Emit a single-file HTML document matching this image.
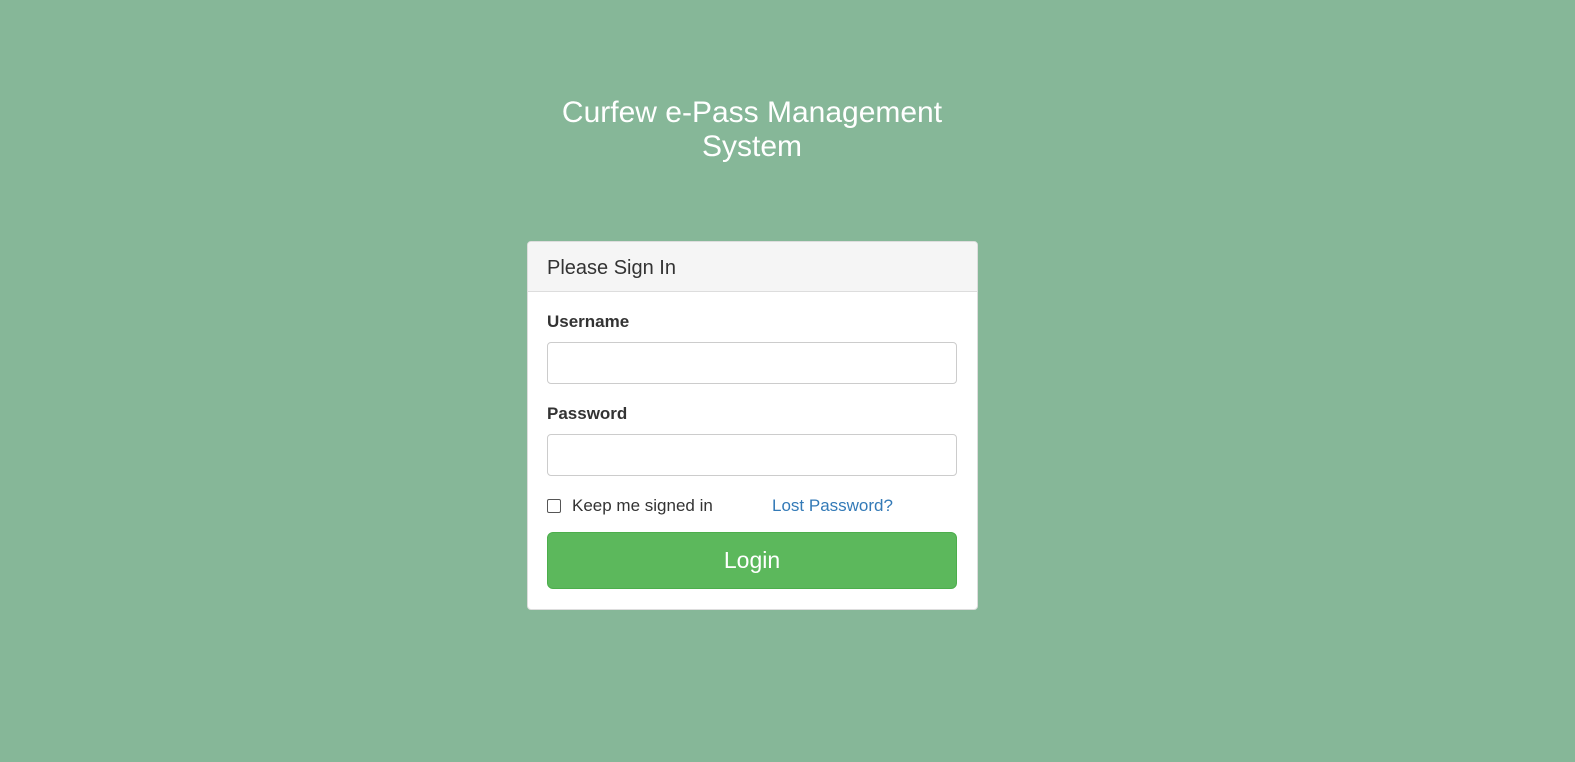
<!DOCTYPE html>
<html><head><style>
body{margin:0;background:#86b798;font-family:"Liberation Sans",Arial,sans-serif;width:1575px;height:762px;position:relative;overflow:hidden}
.t{position:absolute;left:532px;width:440px;top:96px;text-align:center;color:#fff;font-size:30px;line-height:34px}
.p{position:absolute;left:527px;top:241px;width:451px;height:369px;background:#fff;border:1px solid #ddd;border-radius:4px;box-sizing:border-box}
.h{height:50px;background:#f5f5f5;border-bottom:1px solid #ddd;border-radius:4px 4px 0 0;padding-left:19px;line-height:52px;font-size:20px;color:#333;box-sizing:border-box}
.l{position:absolute;left:19px;font-weight:bold;font-size:17px;color:#333}
.i{position:absolute;left:19px;width:410px;height:42px;border:1px solid #ccc;border-radius:4px;box-sizing:border-box}
.cb{position:absolute;left:19px;top:257px;width:14px;height:14px;border:1px solid #555;border-radius:2px;box-sizing:border-box}
.k{position:absolute;left:44px;top:254px;font-size:17px;color:#333}
.lp{position:absolute;left:244px;top:254px;font-size:17px;color:#337ab7}
.b{position:absolute;left:19px;top:290px;width:410px;height:57px;background:#5cb85c;border:1px solid #4cae4c;border-radius:6px;box-sizing:border-box;color:#fff;font-size:23px;text-align:center;line-height:55px}
</style></head><body>
<div class="t">Curfew e-Pass Management System</div>
<div class="p">
<div class="h">Please Sign In</div>
<div class="l" style="top:70px">Username</div>
<div class="i" style="top:100px"></div>
<div class="l" style="top:162px">Password</div>
<div class="i" style="top:192px"></div>
<div class="cb"></div>
<div class="k">Keep me signed in</div>
<div class="lp">Lost Password?</div>
<div class="b">Login</div>
</div>
</body></html>
